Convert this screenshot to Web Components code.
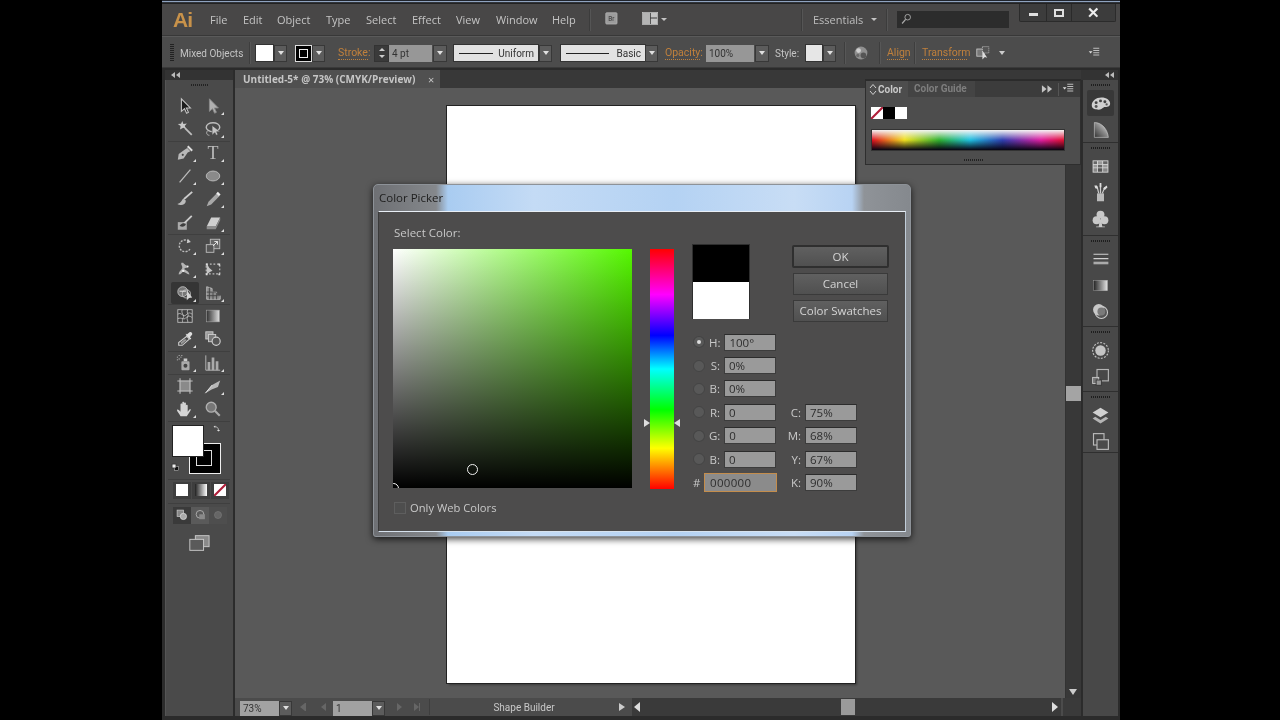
<!DOCTYPE html>
<html>
<head>
<meta charset="utf-8">
<title>Color Picker</title>
<style>
  html, body { margin: 0; height: 100%; background: #000; overflow: hidden; }
  body { font-family: "Open Sans", "Noto Sans", sans-serif; }
</style>
</head>
<body>
<ai-app></ai-app>

<script>
const C = "#bdbdbd";
const ARROW = "M6 2v14l3.5-3 2.3 5 2-1-2.3-4.8H16z";
const ICONS = {
  select: `<path d="${ARROW}" fill="#1c1c1c" stroke="#c4c4c4" stroke-width="1.2"/>`,
  direct: `<path d="${ARROW}" fill="#b0b0b0" stroke="#8a8a8a"/>`,
  wand: `<path d="M7 1l1.2 3.4L12 4 9.7 6.6 11.5 10 8 8.6 4.5 10.5l.6-3.8L2 4.5l3.6-.2z" fill="#c8c8c8"/><path d="M10 9l7.5 7.5" stroke="${C}" stroke-width="2"/>`,
  lasso: `<ellipse cx="10" cy="8" rx="7.5" ry="5" fill="none" stroke="${C}" stroke-width="1.6"/><path d="M4 12c-2 2-1 5 2 5" fill="none" stroke="${C}"/><path d="M9 6v11l3-3 1.5 3 2-1-1.5-3h4z" fill="#c4c4c4" stroke="#444" stroke-width=".6"/>`,
  pen: `<path d="M12.5 4.5l3.5 3.5-3 1.5-4.5 6.5-6.500 1.500 1-6.500 6.500-4.500z" fill="#b8b8b8"/><path d="M13 2.5l5 5" stroke="#ddd" stroke-width="2.2"/><circle cx="7.5" cy="12" r="1.2" fill="#444"/>`,
  type: `<text x="10" y="16.5" text-anchor="middle" font-family="Liberation Serif, serif" font-size="20" fill="#bbb">T</text>`,
  line: `<path d="M4 17L16 3" stroke="${C}" stroke-width="1.4"/>`,
  ellipse: `<ellipse cx="10" cy="10" rx="7.5" ry="5.5" fill="#8a8a8a" stroke="${C}"/>`,
  brush: `<path d="M18 2L9 10" stroke="#ccc" stroke-width="2"/><path d="M8.5 9.5C6 11 6 15 1.5 15.5c3 2 9 2 9.5-3.5z" fill="#bbb"/>`,
  pencil: `<path d="M14 4l3 3-9 9-5 2 2-5z" fill="#a8a8a8"/><path d="M14.5 3l3 3" stroke="#eee" stroke-width="2.6"/>`,
  blob: `<path d="M2 9h10v8.5H2z" fill="#ababab"/><path d="M17.5 2L9 10.5" stroke="#ccc" stroke-width="2"/><path d="M4 13c3-3 5-3 7-2-1 3-4 4-7 2z" fill="#3e3e3e"/>`,
  eraser: `<path d="M8 4h10l-5 10H3z" fill="#cfcfcf"/><path d="M3 14h10v3H3zM13 14l5-10v3l-5 10z" fill="#8c8c8c"/>`,
  rotate: `<path d="M15.5 13.5a6.500 6.500 0 1 1-1-8.500" fill="none" stroke="${C}" stroke-width="1.5" stroke-dasharray="2.2 1.3"/><path d="M13 2l3.500 3.500L12 7z" fill="#ccc"/>`,
  scale: `<rect x="7" y="2.5" width="10.5" height="10.5" fill="#666" stroke="${C}"/><rect x="2.5" y="8.5" width="8.5" height="8.5" fill="#555" stroke="${C}"/><path d="M10 10l5-5M11.5 5H15v3.5" fill="none" stroke="#eee"/>`,
  warp: `<path d="M8 3c2 3 5 3 6 5-2 1-4 0-5 2 2 2 5 2 6 6-3 0-5-3-7-3-2 1-2 3-5 3 0-4 4-5 4-8 0-2-2-3-1-5z" fill="#b4b4b4"/><circle cx="8" cy="12" r="1.3" fill="#eee"/><circle cx="13" cy="7" r="1" fill="#eee"/>`,
  free: `<rect x="2.5" y="4.5" width="15" height="11" fill="none" stroke="${C}" stroke-width="1.3" stroke-dasharray="2 2"/><path d="M3 4v12l4-3 2.500-1L6 9z" fill="#c4c4c4"/><path d="M2 4h2v2H2zM16 4h2v2h-2zM2 15h2v2H2zM16 15h2v2h-2z" fill="#ddd"/>`,
  shape: `<circle cx="7.5" cy="8.5" r="5.5" fill="#777" stroke="${C}"/><circle cx="11.5" cy="11" r="4.5" fill="none" stroke="${C}"/><path d="M4 8h7" stroke="#eee"/><path d="M12 7v11l2.500-2.500 3.500-.5z" fill="#d4d4d4"/>`,
  persp: `<path d="M3 3v14h15v-4h-4V9H9V5z" fill="#8a8a8a" stroke="${C}"/><path d="M6 4v13M10 9v8M14 10v7M3 9h11M3 13h15" stroke="#444"/>`,
  mesh: `<rect x="2" y="3" width="16" height="14" fill="#3e3e3e" stroke="${C}"/><path d="M2 8c4-3 6 4 9 1s4-3 7-1M2 13c4-2 7 2 9-1s5-2 7 0M7 3c-2 4 3 6 1 9s0 3-1 5M13 3c-2 4 2 5 0 8s1 4 0 6" fill="none" stroke="#d0d0d0" stroke-width=".8"/>`,
  gradient: `<defs><linearGradient id="g"><stop offset="0" stop-color="#333"/><stop offset="1" stop-color="#ddd"/></linearGradient></defs><rect x="3" y="3.5" width="14" height="13" fill="url(#g)" stroke="#aaa" stroke-width=".6"/>`,
  dropper: `<path d="M12 7l3 3-8 7H3v-3z" fill="none" stroke="#ccc" stroke-width="1.2"/><path d="M11 5.500l5 5 1-1-1.500-1.500 2.500-3c.5-2-1.500-3.500-3-2.500l-3 2.500L11 4z" fill="#ddd"/><path d="M5 14l5-4 2 1-6 5z" fill="#999"/>`,
  blend: `<rect x="2" y="2" width="8" height="8" fill="#999" stroke="#ccc"/><rect x="5" y="5" width="8" height="8" fill="#777" stroke="#ccc"/><circle cx="13.5" cy="12.5" r="4.5" fill="#555" stroke="#ccc" stroke-width="1.3"/>`,
  sprayer: `<rect x="6" y="8" width="9" height="10" rx="1" fill="#aaa"/><circle cx="10.5" cy="13" r="2.2" fill="#444"/><rect x="8.5" y="5" width="4" height="3" fill="#ccc"/><path d="M1 3h1v1H1zM3 1h1v1H3zM5 3h1v1H5zM3 5h1v1H3zM6 1h1v1H6zM1 6h1v1H1z" fill="#eee"/>`,
  graph: `<path d="M2 1.5v16.500h16" fill="none" stroke="${C}"/><path d="M4 9h3v9H4zM8.500 4h3v14h-3zM13 8h3v10h-3z" fill="#aaa"/>`,
  artboard: `<rect x="4" y="4" width="12" height="12" fill="#8a8a8a"/><path d="M1.500 4.500h17M1.500 15.500h17M4.500 1.500v17M15.500 1.500v17" stroke="${C}" stroke-width="1.2"/>`,
  slice: `<path d="M1.500 18L9 9l9-5-2.500 7-7 3z" fill="#b8b8b8"/><path d="M1.500 18L9 9" stroke="#eee"/>`,
  hand: `<path d="M5 18c-1-3-4-5-4-7 1-1 2 0 4 2V5c0-1.500 2-1.500 2 0v5V3c0-1.500 2-1.500 2 0v7V4c0-1.500 2-1.500 2 0v6-3.500c0-1.500 2-1.500 2 0V13c1-1 2-3 3-3 1 .5 0 2-2 5l-2 3z" fill="#d4d4d4"/>`,
  zoom: `<circle cx="8" cy="8" r="5.5" fill="#777" stroke="#b0b0b0" stroke-width="1.5"/><path d="M12 12l5.500 5.500" stroke="#aaa" stroke-width="2.4"/>`,
  swap: `<path d="M3 3c4 0 7 2 7 7" fill="none" stroke="#ccc" stroke-width="1.5"/><path d="M1 3l3-2v4zM7 9h6l-3 3z" fill="#ddd"/>`,
  defaults: `<rect x="6" y="6" width="8" height="8" fill="#111" stroke="#ccc"/><rect x="2" y="2" width="7" height="7" fill="#eee" stroke="#222"/>`,
  none: `<rect width="20" height="20" fill="#fff"/><path d="M-1 21L21-1" stroke="#b01e3a" stroke-width="3.5"/>`,
  drawnormal: `<rect x="3" y="3" width="9" height="9" fill="#888" stroke="#ccc"/><circle cx="12" cy="12" r="4.5" fill="#aaa" stroke="#ddd"/>`,
  drawbehind: `<circle cx="10" cy="9" r="5.5" fill="none" stroke="#aaa" stroke-width="1.4"/><rect x="9" y="9" width="8" height="7" fill="#8a8a8a"/>`,
  drawinside: `<circle cx="10" cy="10" r="5" fill="#666" stroke="#777"/>`,
  screen: `<rect x="8" y="2" width="15" height="12" fill="#8a8a8a" stroke="#ccc"/><rect x="2" y="6" width="15" height="12" fill="#5a5a5a" stroke="#ccc"/>`,
  palette: `<path d="M2 14c0-5 5-9 11-9s10 3 10 7-4 4-6 4-3 3-7 3-8-1-8-5z" fill="#d0d0d0"/><circle cx="7" cy="11" r="1.7" fill="#444"/><circle cx="12" cy="9" r="1.7" fill="#444"/><circle cx="17" cy="10" r="1.7" fill="#444"/><circle cx="19" cy="13" r="1.3" fill="#555"/><circle cx="7" cy="15.5" r="1.7" fill="#555"/>`,
  guide: `<defs><linearGradient id="q" x1="0" y1="1" x2="1" y2="0"><stop offset="0" stop-color="#333"/><stop offset=".5" stop-color="#888"/><stop offset="1" stop-color="#eee"/></linearGradient></defs><path d="M5 21V4c9 0 15 8 16 17z" fill="url(#q)" stroke="#ddd" stroke-width=".6"/>`,
  swatches: `<rect x="3" y="5" width="18" height="14" fill="#d8d8d8"/><path d="M4 6h4v3H4zM15 6h5v3h-5zM9 10h5v3H9z" fill="#666"/><path d="M9 6h5v3H9zM4 10h4v3H4zM15 10h5v3h-5z" fill="#999"/><path d="M4 14h4v4H4zM15 14h5v4h-5z" fill="#888"/><path d="M9 14h5v4H9z" fill="#555"/>`,
  brushes: `<rect x="8" y="13" width="8" height="9" fill="#bbb"/><path d="M10 13L8 5M12 13V3M14 13l3-7" stroke="#ccc" stroke-width="1.4"/><path d="M5 4l3 0 1 4-3-1zM11 1h2v5h-2zM15 7l4-3 1 2-3 3z" fill="#ddd"/>`,
  club: `<circle cx="12" cy="7.500" r="4.500" fill="#c8c8c8"/><circle cx="7.500" cy="14" r="4.500" fill="#c8c8c8"/><circle cx="16.500" cy="14" r="4.500" fill="#c8c8c8"/><path d="M11 13h2l1 8h-4zM7 21h10v1H7z" fill="#c8c8c8"/>`,
  lines: `<path d="M4 6h17M4 11h17" stroke="#d0d0d0" stroke-width="1.3"/><path d="M4 16h17" stroke="#aaa" stroke-width="3"/>`,
  grad: `<defs><linearGradient id="r"><stop offset="0" stop-color="#222"/><stop offset="1" stop-color="#e4e4e4"/></linearGradient></defs><rect x="4" y="6" width="16" height="12" fill="url(#r)" stroke="#aaa" stroke-width=".5"/>`,
  circles: `<circle cx="13" cy="13" r="7" fill="#555" stroke="#ccc" stroke-width="1.2"/><circle cx="10" cy="10" r="6.5" fill="#c8c8c8"/><circle cx="13" cy="12" r="4.5" fill="#7a7a7a"/>`,
  appearance: `<circle cx="12" cy="12" r="9" fill="none" stroke="#c0c0c0" stroke-width="1.3" stroke-dasharray="2.2 1.6"/><circle cx="12" cy="12" r="6" fill="#c4c4c4"/>`,
  squares: `<rect x="8" y="4" width="13" height="13" fill="none" stroke="#b4b4b4" stroke-width="1.3"/><rect x="3" y="13" width="7" height="7" fill="#777" stroke="#ccc"/><rect x="7" y="16" width="6" height="6" fill="#999" stroke="#333"/>`,
  layers: `<path d="M12 3l9 5.500-9 5.500-9-5.500z" fill="#d0d0d0"/><path d="M6 13.500l6 3.500 6-3.500 3 2-9 5.500-9-5.500z" fill="#b4b4b4"/>`,
  artboards: `<rect x="4" y="3" width="12" height="13" fill="none" stroke="#bbb" stroke-width="1.3"/><rect x="8" y="10" width="13" height="11" fill="#4b4b4b" stroke="#bbb" stroke-width="1.3"/>`,
  globe: `<circle cx="10" cy="10" r="8" fill="#8f8f8f"/><circle cx="7" cy="7" r="3" fill="#cfcfcf"/><circle cx="13" cy="13" r="3.5" fill="#555"/><circle cx="6" cy="13" r="2" fill="#6a6a6a"/>`,
  isolate: `<rect x="1" y="5" width="9" height="9" fill="#777" stroke="#ccc"/><rect x="8" y="2" width="8" height="8" fill="#555" stroke="#bbb" stroke-dasharray="1.5 1"/><path d="M8 7v11l3-3 3 1z" fill="#ddd"/>`,
  panelmenu: `<path d="M1 7h5L3.500 10z" fill="#ddd"/><path d="M7 3h8M7 6h8M7 9h8M7 12h8" stroke="#ccc" stroke-width="1.2"/>`,
  search: `<circle cx="11" cy="6" r="4" fill="none" stroke="#aaa" stroke-width="1.3"/><path d="M8 9l-5 6" stroke="#aaa" stroke-width="1.8"/>`,
  arrange: `<rect x=".5" y=".5" width="19" height="15" fill="#3a3a3a" stroke="#c4c4c4"/><path d="M1 1h9v14H1z" fill="#b4b4b4"/><path d="M11 1h8v6h-8zM11 8h8v7h-8z" fill="#c4c4c4"/>`,
  bridge: `<rect x="1" y="1" width="14" height="14" rx="1" fill="#9c9c9c" stroke="#b4b4b4"/><text x="8" y="11.5" text-anchor="middle" font-family="Roboto, sans-serif" font-size="8" fill="#333">Br</text>`,
  updown: `<path d="M1 5l3-3.500L7 5M1 8l3 3.500L7 8" fill="none" stroke="#d0d0d0" stroke-width="1"/>`,
  more: `<path d="M1 2l5 4-5 4zM7 2l5 4-5 4z" fill="#c4c4c4"/>`,
  collapse: `<path d="M5 1v6L1 4zM10 1v6L6 4z" fill="#bbb"/>`
};

class AiIcon extends HTMLElement {
  connectedCallback() {
    const size = this.getAttribute("size") || 20;
    const box = this.getAttribute("box") || "0 0 20 20";
    const w = this.getAttribute("w") || size;
    const h = this.getAttribute("h") || size;
    this.attachShadow({ mode: "open" }).innerHTML = `
      <style>:host { display: block; width: ${w}px; height: ${h}px; flex: none; } svg { display: block; overflow: hidden; }</style>
      <svg width="${w}" height="${h}" viewBox="${box}">${ICONS[this.getAttribute("name")] || ""}</svg>`;
  }
}
customElements.define("ai-icon", AiIcon);

// little grey dropdown button used all over the bars
class AiDrop extends HTMLElement {
  connectedCallback() {
    const w = this.getAttribute("w") || 13;
    const h = this.getAttribute("h") || 17;
    this.attachShadow({ mode: "open" }).innerHTML = `
      <style>
        :host { display: flex; align-items: center; justify-content: center; flex: none; box-sizing: border-box;
          width: ${w}px; height: ${h}px; background: #5c5c5c; border: 1px solid #383838; }
        i { width: 0; height: 0; border: 3.5px solid transparent; border-top: 4px solid #e0e0e0; border-bottom: 0; }
      </style><i></i>`;
  }
}
customElements.define("ai-drop", AiDrop);

class AiMenubar extends HTMLElement {
  connectedCallback() {
    const menu = [["File", 17], ["Edit", 18], ["Object", 33], ["Type", 24], ["Select", 30], ["Effect", 28], ["View", 24], ["Window", 40], ["Help", 24]];
    this.attachShadow({ mode: "open" }).innerHTML = `
      <style>
        :host { display: flex; align-items: center; height: 32px; box-sizing: border-box; background: #484747;
          border-bottom: 1px solid #383838; color: #c4c4c4; font: 11px "Open Sans", sans-serif; position: relative; }
        .logo { width: 18px; margin-left: 11px; margin-right: 19px; color: #c8924a; font: bold 21px "Liberation Sans", sans-serif; letter-spacing: -1px; }
        nav { display: flex; gap: 16px; }
        nav span { display: block; white-space: nowrap; }
        .sep { width: 1px; height: 22px; background: #3c3c3c; box-shadow: 1px 0 #555; }
        .ess { width: 48px; white-space: nowrap; color: #bdbdbd; margin-left: 11px; }
        .caret { width: 0; height: 0; border: 3px solid transparent; border-top: 3px solid #c4c4c4; border-bottom: 0; }
        .search { display: flex; align-items: center; width: 112px; height: 17px; margin-left: 10px; background: #2c2c2c; padding-left: 3px; box-sizing: border-box; }
        .win { display: flex; align-self: flex-start; margin-left: 10px; height: 18px; background: #3c3c3c; border: 1px solid #2b2b2b; border-top: 0; border-radius: 0 0 2px 2px; box-sizing: border-box; }
        .win div { display: flex; align-items: center; justify-content: center; border-left: 1px solid #2a2a2a; }
        .win div:first-child { border: 0; }
        .win b { display: block; }
      </style>
      <span class="logo">Ai</span>
      <nav>${menu.map(m => `<span style="width:${m[1]}px">${m[0]}</span>`).join("")}</nav>
      <div class="sep" style="margin-left:13px"></div>
      <ai-icon name="bridge" size="16" style="margin-left:15px"></ai-icon>
      <ai-icon name="arrange" w="18" h="16" style="margin-left:20px"></ai-icon>
      <div class="caret" style="margin-left:2px"></div>
      <div class="sep" style="margin-left:134px"></div>
      <span class="ess">Essentials</span>
      <div class="caret" style="margin-left:10px"></div>
      <div class="sep" style="margin-left:9px"></div>
      <div class="search"><ai-icon name="search" size="14"></ai-icon></div>
      <div class="win">
        <div style="width:26px"><b style="width:9px;height:3px;background:#e0e0e0;margin-top:3px"></b></div>
        <div style="width:24px"><b style="width:6px;height:4px;border:2px solid #e0e0e0"></b></div>
        <div style="width:43px;color:#eee;font:bold 15px 'Liberation Sans',sans-serif">✕</div>
      </div>`;
  }
}
customElements.define("ai-menubar", AiMenubar);

class AiControlbar extends HTMLElement {
  connectedCallback() {
    const link = (t, w, ml) => `<span class="link" style="width:${w}px;margin-left:${ml}px">${t}</span>`;
    const sep = ml => `<div class="sep" style="margin-left:${ml}px"></div>`;
    this.attachShadow({ mode: "open" }).innerHTML = `
      <style>
        :host { display: flex; align-items: center; height: 32px; box-sizing: border-box; background: #4c4c4c; padding-top: 2px;
          border-top: 1px solid #5a5a5a; border-bottom: 1px solid #3a3a3a; color: #c4c4c4; font: 10px Roboto, sans-serif; }
        span { white-space: nowrap; display: block; }
        .grip { width: 4px; height: 18px; background: repeating-linear-gradient(#222 0 1px, transparent 1px 2px); }
        .sep { width: 1px; height: 22px; background: #3e3e3e; box-shadow: 1px 0 #575757; flex: none; }
        .link { color: #c0803c; border-bottom: 1px dotted #c0803c; line-height: 12px; font-size: 10.5px; }
        .white { width: 17px; height: 16px; background: #fff; box-shadow: 0 0 0 1px #333; }
        .stroke { width: 17px; height: 17px; box-sizing: border-box; background: #000; border: 1px solid #ddd; display: flex; align-items: center; justify-content: center; }
        .stroke i { width: 7px; height: 7px; border: 1px solid #eee; }
        .spin { width: 15px; height: 17px; background: #3a3a3a; border: 1px solid #333; box-sizing: border-box; display: flex; flex-direction: column; align-items: center; justify-content: space-around; }
        .up, .down { width: 0; height: 0; border: 3px solid transparent; }
        .up { border-bottom: 3px solid #ccc; border-top: 0; }
        .down { border-top: 3px solid #ccc; border-bottom: 0; }
        .inp { height: 17px; line-height: 17px; background: #979797; color: #333; padding-left: 3px; box-sizing: border-box; }
        .stk { display: flex; align-items: center; justify-content: space-between; height: 16px; background: #e2e2e2; color: #333; box-sizing: border-box; padding: 0 4px 0 5px; box-shadow: 0 0 0 1px #333; }
        .stk i { display: block; height: 1px; background: #222; }
        .style { width: 16px; height: 16px; background: #e6e6e6; box-shadow: 0 0 0 1px #333; }
      </style>
      <div class="grip" style="margin-left:8px"></div>
      <span style="width:58px;margin-left:6px">Mixed Objects</span>
      ${sep(11)}
      <div class="white" style="margin-left:6px"></div><ai-drop style="margin-left:1px"></ai-drop>
      <div class="stroke" style="margin-left:8px"><i></i></div><ai-drop></ai-drop>
      ${link("Stroke:", 30, 13)}
      <div class="spin" style="margin-left:6px"><div class="up"></div><div class="down"></div></div>
      <span class="inp" style="width:43px">4 pt</span><ai-drop w="14" style="margin-left:1px"></ai-drop>
      <div class="stk" style="width:84px;margin-left:7px"><i style="width:34px"></i><span>Uniform</span></div><ai-drop style="margin-left:1px"></ai-drop>
      <div class="stk" style="width:84px;margin-left:9px"><i style="width:43px"></i><span>Basic</span></div><ai-drop></ai-drop>
      ${link("Opacity:", 35, 7)}
      <span class="inp" style="width:48px;margin-left:6px">100%</span><ai-drop w="14" style="margin-left:1px"></ai-drop>
      <span style="width:24px;margin-left:6px">Style:</span>
      <div class="style" style="margin-left:7px"></div><ai-drop style="margin-left:1px"></ai-drop>
      ${sep(8)}
      <ai-icon name="globe" size="16" style="margin-left:8px"></ai-icon>
      ${sep(10)}
      ${link("Align", 21, 7)}
      ${sep(6)}
      ${link("Transform", 45, 7)}
      <ai-icon name="isolate" size="16" style="margin-left:9px"></ai-icon>
      <div class="down" style="margin-left:7px;border-width:4px 3.5px 0"></div>
      <ai-icon name="panelmenu" w="15" h="15" style="margin-left:auto;margin-right:17px"></ai-icon>`;
  }
}
customElements.define("ai-controlbar", AiControlbar);

class AiTool extends HTMLElement {
  connectedCallback() {
    const fly = this.hasAttribute("fly");
    const on = this.hasAttribute("on");
    this.attachShadow({ mode: "open" }).innerHTML = `
      <style>
        :host { display: flex; align-items: center; justify-content: center; position: relative; height: 22px; box-sizing: border-box;
          ${on ? "background: #353535; border-radius: 2px;" : ""} }
        .fly { position: absolute; right: 3px; bottom: 2px; width: 0; height: 0; border-left: 3px solid transparent; border-bottom: 3px solid #ddd; }
      </style>
      <ai-icon name="${this.getAttribute("name")}" size="18"></ai-icon>
      ${fly ? '<div class="fly"></div>' : ""}`;
  }
}
customElements.define("ai-tool", AiTool);

class AiToolRow extends HTMLElement {
  connectedCallback() {
    const sep = this.hasAttribute("sep");
    this.attachShadow({ mode: "open" }).innerHTML = `
      <style>
        :host { display: grid; grid-template-columns: 28px 28px; align-items: center; justify-content: center; height: 23.3px; box-sizing: border-box; margin: 0 3px;
          ${sep ? "border-top: 1px solid #3f3f3f;" : ""} }
      </style><slot></slot>`;
  }
}
customElements.define("ai-tool-row", AiToolRow);

class AiToolbox extends HTMLElement {
  connectedCallback() {
    const rows = [
      [["select", 0], ["direct", 1]],
      [["wand", 0], ["lasso", 1]],
      [["pen", 1], ["type", 1], 1],
      [["line", 1], ["ellipse", 1]],
      [["brush", 0], ["pencil", 1]],
      [["blob", 0], ["eraser", 1]],
      [["rotate", 1], ["scale", 1], 1],
      [["warp", 1], ["free", 0]],
      [["shape", 1, 1], ["persp", 1]],
      [["mesh", 0], ["gradient", 0], 1],
      [["dropper", 1], ["blend", 0]],
      [["sprayer", 1], ["graph", 1], 1],
      [["artboard", 0], ["slice", 1], 1],
      [["hand", 1], ["zoom", 0]]
    ];
    const cell = c => `<ai-tool name="${c[0]}" ${c[1] ? "fly" : ""} ${c[2] ? "on" : ""}></ai-tool>`;
    this.attachShadow({ mode: "open" }).innerHTML = `
      <style>
        :host { display: block; width: 68px; flex: none; background: #4a4a4a; box-shadow: inset 1px 0 #555, 1px 0 #2c2c2c; position: relative; }
        .head { height: 10px; background: #333; padding-left: 5px; box-sizing: border-box; padding-top: 1px; }
        .grip { height: 2px; width: 17px; margin: 4px auto 0; background: repeating-linear-gradient(90deg, #222 0 1px, transparent 1px 2px); }
        .tools { margin-top: 8.5px; }
        .fs { position: relative; height: 57px; margin: 0 3px; border-top: 1px solid #3f3f3f; }
        .fill { position: absolute; left: 4px; top: 3px; width: 32px; height: 32px; background: #fff; border: 1px solid #222; box-sizing: border-box; z-index: 1; }
        .strk { position: absolute; left: 21px; top: 21px; width: 32px; height: 31px; background: #000; border: 1px solid #eee; box-sizing: border-box; }
        .strk i { position: absolute; left: 6px; top: 6px; width: 14px; height: 14px; border: 1px solid #ddd; outline: 1px solid #000; }
        .modes { display: flex; gap: 1px; margin: 0 3px; padding: 2px 0 0 5px; border-top: 1px solid #3f3f3f; height: 19px; }
        .modes div { width: 18px; height: 17px; display: flex; align-items: center; justify-content: center; background: #3e3e3e; }
        .modes b { display: block; width: 12px; height: 12px; }
        .draw { display: flex; margin: 2px 3px 0; padding-left: 5px; padding-top: 3px; border-top: 1px solid #3f3f3f; }
        .draw div { width: 18px; height: 17px; display: flex; align-items: center; justify-content: center; background: #5a5a5a; }
        .draw div:first-child { background: #3a3a3a; }
        .draw div:last-child { background: #4e4e4e; }
      </style>
      <div class="head"><ai-icon name="collapse" w="11" h="8" box="0 0 11 8"></ai-icon></div>
      <div class="grip"></div>
      <div class="tools">
        ${rows.map(r => `<ai-tool-row ${r[2] ? "sep" : ""}>${cell(r[0])}${cell(r[1])}</ai-tool-row>`).join("")}
      </div>
      <div class="fs">
        <div class="fill"></div>
        <div class="strk"><i></i></div>
        <ai-icon name="swap" size="11" style="position:absolute;left:45px;top:3px"></ai-icon>
        <ai-icon name="defaults" size="11" style="position:absolute;left:3px;top:41px"></ai-icon>
      </div>
      <div class="modes">
        <div><b style="background:#fff"></b></div>
        <div><b style="background:linear-gradient(90deg,#222,#fff)"></b></div>
        <div><ai-icon name="none" size="12"></ai-icon></div>
      </div>
      <div class="draw">
        <div><ai-icon name="drawnormal" size="14"></ai-icon></div>
        <div><ai-icon name="drawbehind" size="14"></ai-icon></div>
        <div><ai-icon name="drawinside" size="14"></ai-icon></div>
      </div>
      <ai-icon name="screen" size="22" box="0 0 24 20" style="margin:8px 0 0 23px"></ai-icon>`;
  }
}
customElements.define("ai-toolbox", AiToolbox);

class AiDockGroup extends HTMLElement {
  connectedCallback() {
    const h = this.getAttribute("h");
    this.attachShadow({ mode: "open" }).innerHTML = `
      <style>
        :host { display: block; height: ${h}px; box-sizing: border-box; border-bottom: 1px solid #2f2f2f; padding-top: 10px; position: relative; }
        :host::before { content: ""; position: absolute; top: 4px; left: 8px; width: 19px; height: 2px; background: repeating-linear-gradient(90deg, #1e1e1e 0 1px, transparent 1px 2px); }
      </style><slot></slot>`;
  }
}
customElements.define("ai-dock-group", AiDockGroup);

class AiDockBtn extends HTMLElement {
  connectedCallback() {
    const on = this.hasAttribute("on");
    this.attachShadow({ mode: "open" }).innerHTML = `
      <style>
        :host { display: flex; align-items: center; justify-content: center; height: 26px; margin: 0 ${on ? 4 : 0}px; ${on ? "background: #383838; border-radius: 2px;" : ""} }
      </style><ai-icon name="${this.getAttribute("name")}" size="21" box="0 0 24 24"></ai-icon>`;
  }
}
customElements.define("ai-dock-btn", AiDockBtn);

class AiDock extends HTMLElement {
  connectedCallback() {
    this.attachShadow({ mode: "open" }).innerHTML = `
      <style>
        :host { display: block; width: 35px; margin-left: 2px; flex: none; background: #484848; box-shadow: -1px 0 #2c2c2c; }
        .head { display: flex; justify-content: flex-end; height: 10px; background: #333; margin-left: -2px; padding: 1px 3px 0 0; box-sizing: border-box; }
      </style>
      <div class="head"><ai-icon name="collapse" w="11" h="8" box="0 0 11 8"></ai-icon></div>
      <slot></slot>`;
  }
}
customElements.define("ai-dock", AiDock);

class AiColorPanel extends HTMLElement {
  connectedCallback() {
    this.attachShadow({ mode: "open" }).innerHTML = `
      <style>
        :host { position: absolute; left: 703px; top: 79px; width: 216px; height: 86px; background: #4d4d4d; border: 1px solid #2e2e2e; border-top: 2px solid #2b2b2b; box-sizing: border-box; font: bold 10px Roboto, sans-serif; color: #c8c8c8; display: block; }
        .tabs { display: flex; height: 16px; background: #3c3c3c; align-items: center; }
        .tab { display: flex; align-items: center; gap: 1px; height: 16px; background: #4d4d4d; width: 42px; box-sizing: border-box; padding-left: 3px; white-space: nowrap; }
        .tab2 { height: 16px; line-height: 16px; background: #444; width: 67px; padding-left: 6px; box-sizing: border-box; color: #7e7e7e; white-space: nowrap; }
        .sep { width: 1px; height: 13px; background: #555; margin: 0 3px 0 5px; }
        .sw { display: flex; margin: 10px 0 0 5px; }
        .sw div { width: 12px; height: 12px; }
        .spec { margin: 10px 0 0 5px; width: 194px; height: 22px; border: 1px solid #333; box-sizing: border-box;
          background: linear-gradient(180deg, #f4f4f4 0, rgba(255,255,255,0) 50%, rgba(0,0,0,0) 50%, #060312 100%),
            linear-gradient(90deg, #e01020 0, #f0e020 17%, #30b030 35%, #20c0e0 51%, #3040b0 68%, #e020a0 88%, #e01030 100%); }
        .grip { width: 19px; height: 2px; margin: 8px auto 0; background: repeating-linear-gradient(90deg, #222 0 1px, transparent 1px 2px); }
      </style>
      <div class="tabs">
        <div class="tab"><ai-icon name="updown" w="8" h="13" box="0 0 8 13"></ai-icon><span>Color</span></div>
        <div class="tab2">Color Guide</div>
        <ai-icon name="more" w="12" h="12" box="0 0 13 12" style="margin-left:auto"></ai-icon>
        <div class="sep"></div>
        <ai-icon name="panelmenu" w="15" h="15" style="margin-right:3px"></ai-icon>
      </div>
      <div class="sw">
        <div><ai-icon name="none" size="12"></ai-icon></div>
        <div style="background:#000"></div>
        <div style="background:#fff"></div>
      </div>
      <div class="spec"></div>
      <div class="grip"></div>`;
  }
}
customElements.define("ai-color-panel", AiColorPanel);

class AiField extends HTMLElement {
  connectedCallback() {
    const radio = this.hasAttribute("radio");
    const on = this.hasAttribute("on");
    const hex = this.hasAttribute("hex");
    this.attachShadow({ mode: "open" }).innerHTML = `
      <style>
        :host { display: flex; align-items: center; justify-content: flex-end; gap: ${hex ? 2 : 4}px; height: 23.4px; font: 11.5px "Open Sans", sans-serif; color: #c8c8c8; }
        .radio { width: 10px; height: 10px; border-radius: 50%; background: #585858; border: 1px solid #444; margin-right: auto; position: relative; margin-left: 1px; }
        .radio.on::after { content: ""; position: absolute; left: 3px; top: 3px; width: 4px; height: 4px; border-radius: 50%; background: #ddd; }
        .hash { margin-right: auto; margin-left: 1px; }
        label { white-space: nowrap; }
        .val { box-sizing: border-box; width: 52px; height: 17px; line-height: 15px; padding-left: 4px; background: #9a9a9a; color: #2e2e2e; border: 1px solid #3c3c3c; border-top-color: #2c2c2c; }
        .val.hex { width: 73px; height: 19px; line-height: 17px; padding-left: 5px; background: #8b8b8b; border-color: #c48d4c; letter-spacing: .3px; }
      </style>
      ${radio ? `<div class="radio ${on ? "on" : ""}"></div>` : ""}
      <label class="${hex ? "hash" : ""}">${this.getAttribute("label")}</label>
      <div class="val ${hex ? "hex" : ""}" style="${radio ? "margin-right:1px" : ""}">${this.getAttribute("value")}</div>`;
  }
}
customElements.define("ai-field", AiField);

class AiButton extends HTMLElement {
  connectedCallback() {
    const main = this.hasAttribute("main");
    this.attachShadow({ mode: "open" }).innerHTML = `
      <style>
        :host { display: block; box-sizing: border-box; text-align: center; background: linear-gradient(#606060, #505050); color: #d4d4d4;
          font: 11.5px "Open Sans", sans-serif; white-space: nowrap;
          ${main ? "height: 23px; line-height: 20px; width: 97px; border: 2px solid #2f2f2f; border-radius: 2px;" : "height: 22px; line-height: 20px; width: 95px; margin-left: 1px; border: 1px solid #3a3a3a;"} }
      </style><slot></slot>`;
  }
}
customElements.define("ai-button", AiButton);

class AiColorPicker extends HTMLElement {
  connectedCallback() {
    this.attachShadow({ mode: "open" }).innerHTML = `
      <style>
        :host { position: absolute; left: 211px; top: 184px; width: 538px; height: 353px; box-sizing: border-box; display: flex; flex-direction: column;
          border: 1px solid #8d9298; border-radius: 5px 5px 3px 3px; box-shadow: 0 2px 7px rgba(0,0,0,.75);
          background:
            linear-gradient(90deg, #6e7074 0, #85888c 62px, #a9ccf1 74px, #c4dbf5 160px, #b4d2f3 300px, #c8ddf5 420px, #b8d3f3 478px, #8f9398 490px, #85898e 100%);
          font: 11.5px "Open Sans", sans-serif; color: #c8c8c8; padding: 0 4px 4px; }
        .title { height: 26px; line-height: 25px; padding-left: 1px; color: #1e1e1e; }
        .body { flex: 1; background: #4d4c4c; border: 1px solid #e8eef5; border-left-color: #3a3a3a; border-right-color: #c0ccd8; border-bottom-color: #d6e2ee; box-sizing: border-box; padding: 13px 0 0 14px; }
        .lbl { height: 24px; padding-left: 1px; }
        .row { display: flex; align-items: flex-start; }
        .sq { position: relative; width: 239px; height: 239px; overflow: hidden; flex: none;
          background: linear-gradient(to top, #000, rgba(0,0,0,0)), linear-gradient(to right, #fff, #55f800); }
        .ring { position: absolute; left: 74px; top: 215px; width: 9px; height: 9px; border: 1.5px solid #f0f0f0; border-radius: 50%; }
        .ring.corner { left: -5px; top: 234px; border-color: #fff; }
        .hue { position: relative; width: 24px; height: 240px; margin-left: 18px; flex: none;
          background: linear-gradient(180deg, #f00 0, #f0f 19%, #00f 36%, #0ff 50%, #0f0 67%, #ff0 83%, #f00 100%); }
        .tl, .tr { position: absolute; top: 170px; width: 0; height: 0; border: 4px solid transparent; }
        .tl { left: -6px; border-left: 6px solid #ddd; border-right: 0; }
        .tr { right: -6px; border-right: 6px solid #ddd; border-left: 0; }
        .right { margin-left: 18px; margin-top: -5px; width: 197px; }
        .top { display: flex; }
        .preview { width: 58px; height: 75px; box-sizing: border-box; border: 1px solid #2e2e2e; }
        .preview div { height: 37px; background: #000; }
        .preview div + div { background: #fff; }
        .btns { margin-left: 42px; margin-top: 1px; display: flex; flex-direction: column; gap: 5px; }
        .fields { display: grid; grid-template-columns: 85px 80px; margin-top: 8.5px; }
        .check { display: flex; align-items: center; gap: 4px; margin-top: 12px; margin-left: 1px; font-size: 11.2px; }
        .check i { display: block; width: 12px; height: 12px; box-sizing: border-box; background: #4e4e4e; border: 1px solid #5e5e5e; }
        span.e { display: block; }
      </style>
      <div class="title">Color Picker</div>
      <div class="body">
        <div class="lbl">Select Color:</div>
        <div class="row">
          <div>
            <div class="sq"><div class="ring"></div><div class="ring corner"></div></div>
            <div class="check"><i></i><span>Only Web Colors</span></div>
          </div>
          <div class="hue"><div class="tl"></div><div class="tr"></div></div>
          <div class="right">
            <div class="top">
              <div class="preview"><div></div><div></div></div>
              <div class="btns">
                <ai-button main>OK</ai-button>
                <ai-button>Cancel</ai-button>
                <ai-button>Color Swatches</ai-button>
              </div>
            </div>
            <div class="fields">
              <ai-field radio on label="H:" value="100°"></ai-field><span class="e"></span>
              <ai-field radio label="S:" value="0%"></ai-field><span class="e"></span>
              <ai-field radio label="B:" value="0%"></ai-field><span class="e"></span>
              <ai-field radio label="R:" value="0"></ai-field><ai-field label="C:" value="75%"></ai-field>
              <ai-field radio label="G:" value="0"></ai-field><ai-field label="M:" value="68%"></ai-field>
              <ai-field radio label="B:" value="0"></ai-field><ai-field label="Y:" value="67%"></ai-field>
              <ai-field hex label="#" value="000000"></ai-field><ai-field label="K:" value="90%"></ai-field>
            </div>
          </div>
        </div>
      </div>`;
  }
}
customElements.define("ai-color-picker", AiColorPicker);

class AiStatusbar extends HTMLElement {
  connectedCallback() {
    const nav = (ml, dir, bar) => `<span class="nav ${dir}" style="margin-left:${ml}px">${bar ? "<u></u>" : ""}</span>`;
    this.attachShadow({ mode: "open" }).innerHTML = `
      <style>
        :host { display: flex; align-items: center; height: 18px; background: #4b4b4b; font: 10px Roboto, sans-serif; color: #c8c8c8; flex: none; }
        .inp { width: 39px; height: 15px; line-height: 15px; background: #a2a2a2; color: #333; padding-left: 3px; box-sizing: border-box; margin-top: 2px; }
        .nav { display: flex; align-items: center; width: 6px; }
        .nav.l::before { content: ""; border: 4px solid transparent; border-right: 5px solid #666; border-left: 0; }
        .nav.r::before { content: ""; border: 4px solid transparent; border-left: 5px solid #666; border-right: 0; }
        .nav u { display: block; width: 1px; height: 8px; background: #666; }
        .sep { width: 1px; height: 16px; background: #3e3e3e; margin-left: 9px; }
        .name { width: 190px; text-align: center; white-space: nowrap; margin-top: 1px; }
        .play { width: 0; height: 0; border: 4px solid transparent; border-left: 6px solid #ccc; border-right: 0; }
        .track { flex: 1; height: 18px; background: #3a3a3a; margin-left: 7px; display: flex; align-items: center; position: relative; }
        .track i { position: absolute; top: 4px; border: 5px solid transparent; }
        .track .a { left: 2px; border-right: 6px solid #ddd; border-left: 0; }
        .track .b { right: 3px; border-left: 6px solid #ddd; border-right: 0; }
        .thumb { position: absolute; left: 209px; top: 1px; width: 14px; height: 16px; background: #9a9a9a; }
      </style>
      <span class="inp" style="margin-left:5px">73%</span>
      <ai-drop h="15" style="margin-top:2px"></ai-drop>
      ${nav(8, "l", 1)}${nav(15, "l")}
      <span class="inp" style="margin-left:6px">1</span>
      <ai-drop h="15" style="margin-top:2px"></ai-drop>
      ${nav(12, "r")}${nav(11, "r", 1)}
      <div class="sep"></div>
      <span class="name" style="margin-left:-1px">Shape Builder</span>
      <span class="play"></span>
      <div class="track"><i class="a"></i><div class="thumb"></div><i class="b"></i></div>
      <div style="width:18px;align-self:stretch;background:#3a3a3a;margin-left:2px"></div>`;
  }
}
customElements.define("ai-statusbar", AiStatusbar);

class AiWorkspace extends HTMLElement {
  connectedCallback() {
    this.attachShadow({ mode: "open" }).innerHTML = `
      <style>
        :host { display: flex; flex-direction: column; flex: 1; min-width: 0; margin-left: 2px; }
        .tabs { display: flex; height: 18px; background: #383838; flex: none; }
        .tab { position: relative; display: flex; align-items: center; width: 205px; height: 18px; box-sizing: border-box; padding-left: 8px; background: #505050; color: #c6c6c6; font: bold 10px "Open Sans", sans-serif; white-space: nowrap; }
        .x { position: absolute; left: 193px; font-weight: normal; font-size: 11px; }
        .main { display: flex; flex: 1; min-height: 0; }
        .canvas { flex: 1; background: #595959; padding: 18px 0 0 212px; box-sizing: border-box; }
        .board { width: 408px; height: 577px; background: #fff; box-shadow: 0 0 0 1px #222, 2px 2px 2px rgba(0,0,0,.35); }
        .vs { width: 16px; background: #383838; position: relative; border-left: 1px solid #333; box-sizing: border-box; }
        .thumb { position: absolute; left: 0; right: 0; top: 298px; height: 15px; background: #a4a4a4; }
        .down { position: absolute; left: 3px; bottom: 3px; border: 4.5px solid transparent; border-top: 6px solid #ccc; border-bottom: 0; }
      </style>
      <div class="tabs"><div class="tab">Untitled-5* @ 73% (CMYK/Preview)<span class="x">×</span></div></div>
      <div class="main">
        <div class="canvas"><div class="board"></div></div>
        <div class="vs"><div class="thumb"></div><div class="down"></div></div>
      </div>
      <ai-statusbar></ai-statusbar>`;
  }
}
customElements.define("ai-workspace", AiWorkspace);

class AiApp extends HTMLElement {
  connectedCallback() {
    this.attachShadow({ mode: "open" }).innerHTML = `
      <style>
        :host { display: flex; flex-direction: column; position: relative; width: 958px; height: 720px; margin-left: 162px; background: #2b2b2b; filter: blur(.3px); }
        .edge { height: 4px; background: linear-gradient(#20242c 0 1px, #8fa3bf 1px 2px, #30343a 2px 3px, #222 3px); flex: none; }
        .work { display: flex; flex: 1; min-height: 0; margin: 2px 2px 4px 3px; }
      </style>
      <div class="edge"></div>
      <ai-menubar></ai-menubar>
      <ai-controlbar></ai-controlbar>
      <div class="work">
        <ai-toolbox></ai-toolbox>
        <ai-workspace></ai-workspace>
        <ai-dock>
          <ai-dock-group h="63"><ai-dock-btn name="palette" on></ai-dock-btn><ai-dock-btn name="guide"></ai-dock-btn></ai-dock-group>
          <ai-dock-group h="93"><ai-dock-btn name="swatches"></ai-dock-btn><ai-dock-btn name="brushes"></ai-dock-btn><ai-dock-btn name="club"></ai-dock-btn></ai-dock-group>
          <ai-dock-group h="91"><ai-dock-btn name="lines"></ai-dock-btn><ai-dock-btn name="grad"></ai-dock-btn><ai-dock-btn name="circles"></ai-dock-btn></ai-dock-group>
          <ai-dock-group h="65"><ai-dock-btn name="appearance"></ai-dock-btn><ai-dock-btn name="squares"></ai-dock-btn></ai-dock-group>
          <ai-dock-group h="61"><ai-dock-btn name="layers"></ai-dock-btn><ai-dock-btn name="artboards"></ai-dock-btn></ai-dock-group>
        </ai-dock>
      </div>
      <ai-color-panel></ai-color-panel>
      <ai-color-picker></ai-color-picker>`;
  }
}
customElements.define("ai-app", AiApp);
</script>
</body>
</html>
